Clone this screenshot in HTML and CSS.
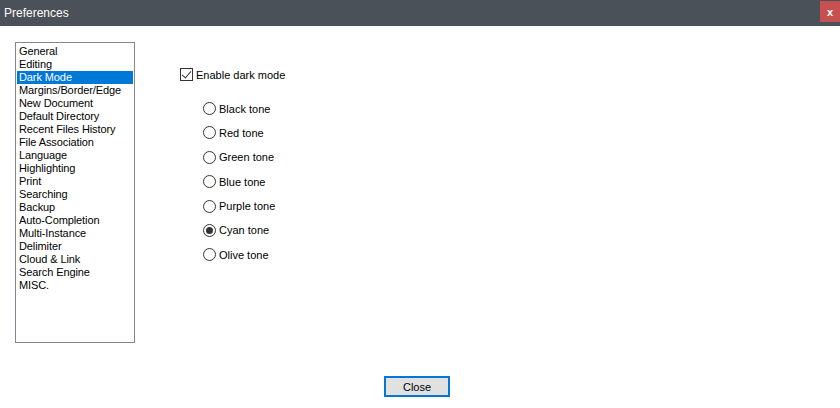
FILE: index.html
```html
<!DOCTYPE html>
<html lang="en">
<head>
  <meta charset="UTF-8">
  <title>Preferences</title>
  <link rel="stylesheet" href="styles.css">
</head>
<body>
  <div class="window">
    <header class="titlebar">
      <span class="title">Preferences</span>
      <button class="close-x">x</button>
    </header>

    <div class="content">
      <ul class="page-list">
        <li>General</li>
        <li>Editing</li>
        <li class="selected">Dark Mode</li>
        <li>Margins/Border/Edge</li>
        <li>New Document</li>
        <li>Default Directory</li>
        <li>Recent Files History</li>
        <li>File Association</li>
        <li>Language</li>
        <li>Highlighting</li>
        <li>Print</li>
        <li>Searching</li>
        <li>Backup</li>
        <li>Auto-Completion</li>
        <li>Multi-Instance</li>
        <li>Delimiter</li>
        <li>Cloud &amp; Link</li>
        <li>Search Engine</li>
        <li>MISC.</li>
      </ul>

      <section class="page">
        <label class="check-row"><span class="check"></span>Enable dark mode</label>
        <div class="tones">
          <label class="radio-row"><span class="radio"></span>Black tone</label>
          <label class="radio-row"><span class="radio"></span>Red tone</label>
          <label class="radio-row"><span class="radio"></span>Green tone</label>
          <label class="radio-row"><span class="radio"></span>Blue tone</label>
          <label class="radio-row"><span class="radio"></span>Purple tone</label>
          <label class="radio-row"><span class="radio on"></span>Cyan tone</label>
          <label class="radio-row"><span class="radio"></span>Olive tone</label>
        </div>
      </section>
    </div>

    <footer class="buttons">
      <button class="btn">Close</button>
    </footer>
  </div>
</body>
</html>
```

FILE: styles.css
```css
* {
  box-sizing: border-box;
}
body {
  margin: 0;
  font-family: Tahoma, "Liberation Sans", Arial, sans-serif;
  font-size: 11px;
  color: #000;
  background: #fff;
}
.window {
  width: 840px;
  height: 408px;
  display: flex;
  flex-direction: column;
}
.titlebar {
  flex-shrink: 0;
  height: 26px;
  background: #4a5158;
  display: flex;
  align-items: flex-start;
  justify-content: space-between;
}
.title {
  color: #fff;
  font-size: 12px;
  padding: 6px 0 0 4px;
}
.close-x {
  margin-top: 1px;
  width: 20px;
  height: 21px;
  border: none;
  padding: 0;
  background: #c75050;
  color: #fff;
  font-family: inherit;
  font-size: 11px;
  font-weight: bold;
}
.content {
  flex-shrink: 0;
  display: flex;
  padding: 16px 0 0 15px;
  height: 317px;
}
.page-list {
  list-style: none;
  margin: 0;
  padding: 2px 1px;
  width: 120px;
  height: 301px;
  border: 1px solid #828790;
  letter-spacing: -0.1px;
}
.page-list li {
  height: 13px;
  line-height: 13px;
  padding-left: 2px;
  white-space: nowrap;
}
.page-list li.selected {
  background: #0078d7;
  color: #fff;
}
.page {
  padding: 26px 0 0 45px;
}
.check-row, .radio-row {
  display: flex;
  align-items: center;
  height: 13px;
}
.check {
  width: 13px;
  height: 13px;
  border: 1px solid #333;
  margin-right: 3px;
  position: relative;
}
.check::after {
  content: "";
  position: absolute;
  left: 3px;
  top: 0;
  width: 4px;
  height: 8px;
  border: solid #333;
  border-width: 0 1px 1px 0;
  transform: rotate(40deg);
}
.tones {
  padding: 21px 0 0 23px;
  display: flex;
  flex-direction: column;
  gap: 11.4px;
}
.radio {
  width: 13px;
  height: 13px;
  border: 1px solid #333;
  border-radius: 50%;
  margin-right: 3px;
  display: flex;
  align-items: center;
  justify-content: center;
}
.radio.on::after {
  content: "";
  width: 7px;
  height: 7px;
  border-radius: 50%;
  background: #333;
}
.buttons {
  flex-shrink: 0;
  display: flex;
  justify-content: center;
  padding-top: 33px;
}
.btn {
  width: 66px;
  height: 21px;
  margin-right: 6px;
  background: #e1e1e1;
  border: 2px solid #0078d7;
  font-family: inherit;
  font-size: 11px;
  padding: 0;
}
```
